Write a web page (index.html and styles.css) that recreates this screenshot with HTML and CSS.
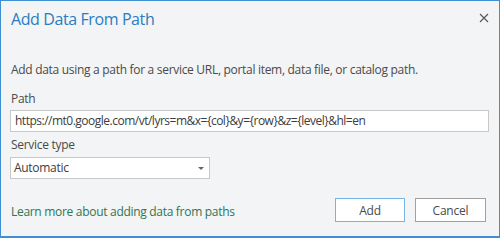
FILE: index.html
```html
<!DOCTYPE html>
<html lang="en">
<head>
<meta charset="utf-8">
<title>Add Data From Path</title>
<link rel="stylesheet" href="styles.css">
</head>
<body>
<div class="dialog">
  <div class="header">
    <h1 class="title">Add Data From Path</h1>
    <button class="close" aria-label="Close">
      <svg width="10" height="10" viewBox="0 0 10 10"><path d="M1 1 L9 9 M9 1 L1 9" stroke="#555" stroke-width="1.1" fill="none"/></svg>
    </button>
  </div>
  <div class="body">
    <p class="desc">Add data using a path for a service URL, portal item, data file, or catalog path.</p>
    <label class="label">Path</label>
    <div class="input">https://mt0.google.com/vt/lyrs=m&amp;x={col}&amp;y={row}&amp;z={level}&amp;hl=en</div>
    <label class="label label-service">Service type</label>
    <div class="select">
      <span>Automatic</span>
      <svg class="caret" width="6" height="4" viewBox="0 0 6 4"><path d="M0 0 H6 L3 3 Z" fill="#666"/></svg>
    </div>
  </div>
  <div class="footer">
    <a class="link" href="#">Learn more about adding data from paths</a>
    <div class="buttons">
      <button class="btn btn-default">Add</button>
      <button class="btn">Cancel</button>
    </div>
  </div>
</div>
</body>
</html>
```
FILE: styles.css
```css
html, body {
  margin: 0;
  padding: 0;
  background: #f3f4f5;
}
.dialog {
  box-sizing: border-box;
  width: 500px;
  height: 238px;
  border: 1px solid #3f8fd2;
  border-bottom-width: 2px;
  background: #f3f4f5;
  font-family: "Open Sans", "Noto Sans", sans-serif;
  font-size: 12px;
  letter-spacing: -0.3px;
  color: #4a4a4a;
  display: flex;
  flex-direction: column;
}
.header {
  display: flex;
  align-items: flex-start;
  justify-content: space-between;
  padding: 7px 10px 0 10px;
  height: 29px;
  box-sizing: border-box;
}
.title {
  margin: 0;
  font-size: 16px;
  font-weight: 400;
  line-height: 22px;
  letter-spacing: -0.4px;
  color: #2b7cc2;
}
.close {
  border: 0;
  background: transparent;
  padding: 0;
  margin: 5px 0 0 0;
  width: 10px;
  height: 10px;
  display: flex;
}
.body {
  padding: 0 10px 0 9px;
  display: flex;
  flex-direction: column;
}
.desc {
  margin: 32px 0 0 1px;
  line-height: 16px;
}
.label {
  margin: 13px 0 0 1px;
  line-height: 16px;
}
.label-service {
  margin-top: 5px;
}
.input {
  box-sizing: border-box;
  height: 22px;
  margin-top: 3px;
  border: 1px solid #c8c8c8;
  background: #fff;
  line-height: 20px;
  letter-spacing: -0.5px;
  padding: 0 4px;
  color: #3c3c3c;
}
.select {
  box-sizing: border-box;
  width: 200px;
  height: 22px;
  margin-top: 4px;
  border: 1px solid #c8c8c8;
  background: #fff;
  line-height: 20px;
  padding: 0 5px 0 3px;
  display: flex;
  align-items: center;
  justify-content: space-between;
  color: #3c3c3c;
}
.caret {
  margin-top: 1px;
}
.footer {
  margin-top: auto;
  padding: 0 13px 14px 10px;
  display: flex;
  align-items: center;
  justify-content: space-between;
}
.link {
  color: #2f7552;
  text-decoration: none;
  margin-top: 3px;
}
.buttons {
  display: flex;
  gap: 10px;
}
.btn {
  box-sizing: border-box;
  width: 71px;
  height: 24px;
  border: 1px solid #a0a0a0;
  background: #fff;
  font-family: inherit;
  font-size: 12px;
  letter-spacing: -0.2px;
  color: #4a4a4a;
  padding: 0;
}
.btn-default {
  border-color: #74b4e6;
  width: 70px;
}
```
